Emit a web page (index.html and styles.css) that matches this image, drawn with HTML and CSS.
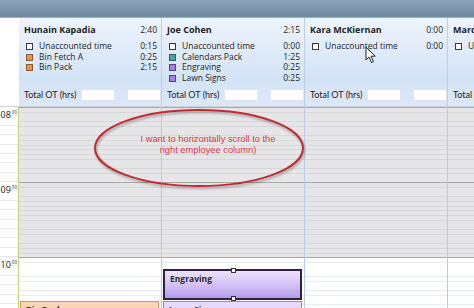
FILE: index.html
```html
<!DOCTYPE html>
<html lang="en">
<head>
  <meta charset="UTF-8">
  <title>Employee schedule</title>
  <link rel="stylesheet" href="styles.css">
</head>
<body>
  <div class="app">
    <div class="topbar"></div>

    <div class="heads">
      <div class="gutter-head"></div>

      <div class="col-head">
        <div class="name-row"><b>Hunain Kapadia</b><span>2:40</span></div>
        <ul class="tasks">
          <li><i class="box"></i>Unaccounted time<span>0:15</span></li>
          <li><i class="box orange"></i>Bin Fetch A<span>0:25</span></li>
          <li><i class="box orange"></i>Bin Pack<span>2:15</span></li>
        </ul>
        <div class="total">Total OT (hrs)<input type="text"><input type="text"></div>
      </div>

      <div class="col-head">
        <div class="name-row"><b>Joe Cohen</b><span>2:15</span></div>
        <ul class="tasks">
          <li><i class="box"></i>Unaccounted time<span>0:00</span></li>
          <li><i class="box teal"></i>Calendars Pack<span>1:25</span></li>
          <li><i class="box purple"></i>Engraving<span>0:25</span></li>
          <li><i class="box purple"></i>Lawn Signs<span>0:25</span></li>
        </ul>
        <div class="total">Total OT (hrs)<input type="text"><input type="text"></div>
      </div>

      <div class="col-head">
        <div class="name-row"><b>Kara McKiernan</b><span>0:00</span></div>
        <ul class="tasks">
          <li><i class="box"></i>Unaccounted time<span>0:00</span></li>
        </ul>
        <div class="total">Total OT (hrs)<input type="text"><input type="text"></div>
      </div>

      <div class="col-head">
        <div class="name-row"><b>Marco Rossi</b><span>0:00</span></div>
        <ul class="tasks">
          <li><i class="box"></i>Unaccounted time<span>0:00</span></li>
        </ul>
        <div class="total">Total OT (hrs)<input type="text"><input type="text"></div>
      </div>
    </div>

    <div class="grid">
      <div class="gutter">
        <div class="hour-label">08<sup>00</sup></div>
        <div class="hour-label">09<sup>00</sup></div>
        <div class="hour-label">10<sup>00</sup></div>
      </div>

      <div class="col">
        <div class="hour off"></div>
        <div class="hour off"></div>
        <div class="hour"></div>
        <div class="event bin-pack">Bin Pack</div>
      </div>

      <div class="col">
        <div class="hour off"></div>
        <div class="hour off"></div>
        <div class="hour"></div>
        <div class="event engraving">Engraving<i class="grip top"></i><i class="grip bottom"></i></div>
        <div class="event lawn">Lawn Signs</div>
      </div>

      <div class="col">
        <div class="hour off"></div>
        <div class="hour off"></div>
        <div class="hour"></div>
      </div>

      <div class="col">
        <div class="hour off"></div>
        <div class="hour off"></div>
        <div class="hour"></div>
      </div>
    </div>

    <!-- annotation drawn over the calendar -->
    <svg class="ring" width="214" height="84" viewBox="0 0 214 84">
      <ellipse cx="106" cy="41" rx="104" ry="38" fill="none" stroke="#c42a31" stroke-width="2"/>
    </svg>
    <div class="note">I want to horizontally scroll to the<br>right employee column)</div>

    <svg class="cursor" width="12" height="18" viewBox="0 0 12 18">
      <path d="M1 1 L1 14 L4 11 L6.5 16.5 L8.5 15.6 L6 10.2 L10.2 10.2 Z" fill="#fff" stroke="#222" stroke-width="1"/>
    </svg>
  </div>
</body>
</html>
```

FILE: styles.css
```css
body {
  margin: 0;
  padding: 0;
  background: #fff;
  font-family: 'Open Sans', 'Liberation Sans', sans-serif;
  font-size: 8.5px;
  color: #1e1e1e;
}
.app {
  position: relative;
  width: 474px;
  height: 308px;
  overflow: hidden;
}
.topbar {
  height: 17px;
  background: linear-gradient(#8ea4ba, #7088a2);
  border-bottom: 1px solid #c8a774;
}

/* employee headers */
.heads {
  display: flex;
  height: 88px;
  border-bottom: 1px solid #c3d4ea;
}
.gutter-head {
  flex: 0 0 19px;
  background: #fff;
}
.col-head {
  flex: 0 0 143px;
  min-width: 0;
  box-sizing: border-box;
  display: flex;
  flex-direction: column;
  padding: 6px 4px 5px 5px;
  background: linear-gradient(#eef4fc, #d3e3f6 70%, #dde8f6);
  border-right: 1px solid #b9cfe8;
  white-space: nowrap;
  overflow: hidden;
}
.name-row {
  display: flex;
  justify-content: space-between;
  height: 12px;
  line-height: 12px;
}
.name-row b {
  font-weight: 700;
  font-size: 9px;
}
.tasks {
  list-style: none;
  margin: 5px 0 0;
  padding: 0;
}
.tasks li {
  display: flex;
  align-items: center;
  height: 10.7px;
  line-height: 10.7px;
  padding-left: 2px;
}
.tasks li span {
  margin-left: auto;
}
.box {
  flex: 0 0 auto;
  width: 5px;
  height: 5px;
  border: 1px solid #3a3a3a;
  background: #fff;
  margin-right: 6px;
}
.box.orange {
  background: #e8934a;
  border-color: #8d5a2c;
}
.box.teal {
  background: #4fa2a2;
  border-color: #2d6464;
}
.box.purple {
  background: #a780e2;
  border-color: #5b3c8e;
}
.total {
  margin-top: auto;
  display: flex;
  align-items: center;
  height: 13px;
  font-family: Lato, 'Open Sans', sans-serif;
  font-size: 9px;
}
.total input {
  flex: 0 0 auto;
  width: 34px;
  height: 12px;
  box-sizing: border-box;
  margin: 0 0 0 5px;
  padding: 0;
  border: 1px solid #dde7f3;
  background: #fff;
}
.total input + input {
  margin-left: 12px;
}

/* day grid */
.grid {
  display: flex;
  height: 220px;
}
.gutter {
  flex: 0 0 18px;
  border-right: 1px solid #c6d178;
}
.hour-label {
  height: 75px;
  text-align: right;
  padding-right: 1px;
  font-size: 9px;
  line-height: 10px;
  margin-left: -4px;
  white-space: nowrap;
  background: repeating-linear-gradient(#fff 0 8.4px, #e4e8ee 8.4px 9.4px);
}
.hour-label sup {
  font-size: 4.5px;
  vertical-align: 4px;
  margin-left: 1px;
}
.col {
  position: relative;
  flex: 0 0 142px;
  border-right: 1px solid #b7cbe4;
}
.hour {
  height: 75px;
  border-top: 1px solid #fff;
  box-sizing: border-box;
  background: repeating-linear-gradient(#fff 0 4.1px, #e6edf6 4.1px 4.7px);
}
.hour.off {
  border-top-color: #a9a9a9;
  background: repeating-linear-gradient(#e6e6e8 0 3.9px, #d6d7da 3.9px 4.7px);
}
.hour.off + .hour:not(.off) {
  border-top-color: #a9a9a9;
}

/* appointments */
.event {
  position: absolute;
  left: 1px;
  right: 2px;
  padding: 2px 5px;
  font-size: 8.5px;
  font-weight: 700;
  color: #2b2b2b;
  box-sizing: border-box;
}
.bin-pack {
  top: 194px;
  height: 30px;
  background: #fbd4b3;
  border: 1px solid #c99a6c;
}
.engraving {
  top: 162px;
  height: 31px;
  background: linear-gradient(#ece2fc, #c9b4f3 70%, #b49aea);
  border: 2px solid #2a2346;
}
.lawn {
  top: 194px;
  height: 30px;
  background: linear-gradient(#e9ddfc, #d3c2f6);
  border: 1px solid #9a84c8;
}
.grip {
  position: absolute;
  left: 66px;
  width: 3px;
  height: 3px;
  background: #fff;
  border: 1px solid #333;
}
.grip.top {
  top: -3px;
}
.grip.bottom {
  bottom: -3px;
}

/* annotation */
.ring {
  position: absolute;
  left: 93px;
  top: 107px;
  filter: drop-shadow(1px 2px 1px rgba(0, 0, 0, 0.3));
}
.note {
  position: absolute;
  left: 118px;
  top: 134px;
  width: 180px;
  text-align: center;
  font-family: 'Liberation Sans', Arial, sans-serif;
  font-size: 9.3px;
  line-height: 11px;
  color: #d8323a;
  text-shadow: 0 0 1px rgba(255, 255, 255, 0.6);
}
.cursor {
  position: absolute;
  left: 365px;
  top: 46px;
}
```
